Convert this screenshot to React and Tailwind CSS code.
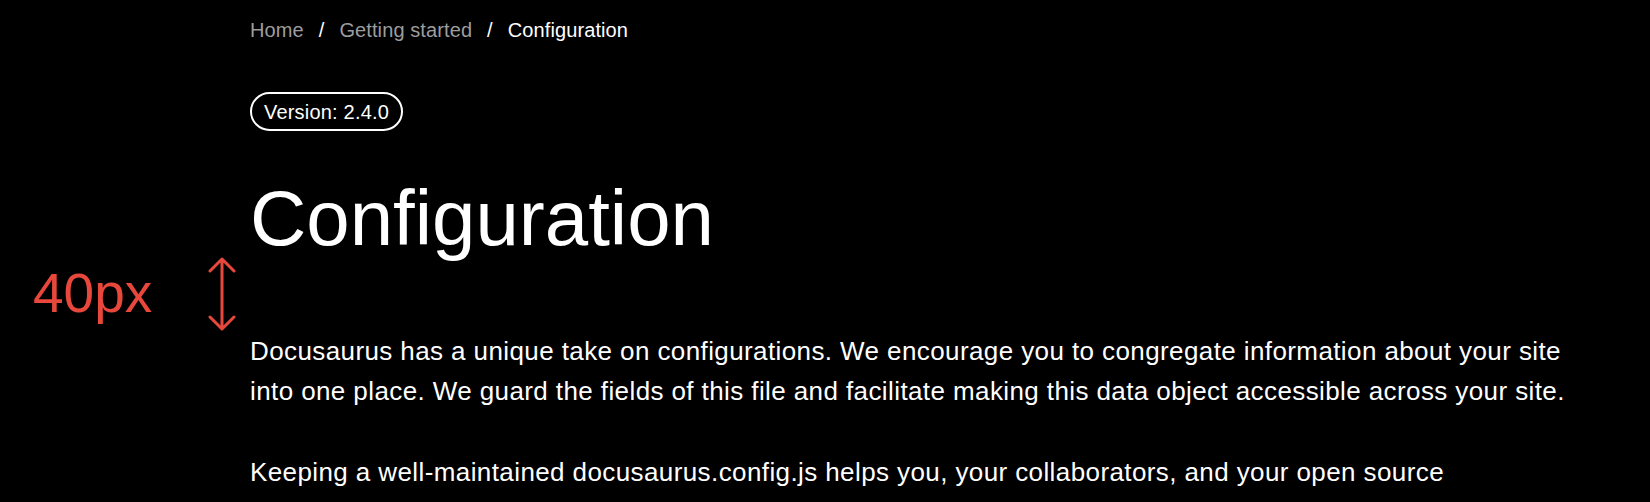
export default function App() {
  const crumbs = [
    { text: "Home", active: false },
    { text: "Getting started", active: false },
    { text: "Configuration", active: true },
  ];

  return (
    <div className="relative w-full h-[502px] overflow-hidden bg-black text-white font-['Liberation_Sans',Arial,sans-serif]">
      {/* spacing annotation */}
      <div className="absolute left-[33px] top-[266px] text-[55px] leading-[55px] text-[#e8473c]">40px</div>
      <svg className="absolute left-[208px] top-[256px]" width="28" height="76" viewBox="0 0 28 76" fill="none">
        <path d="M14 3 V73 M2 15 L14 3 L26 15 M2 61 L14 73 L26 61" stroke="#e8473c" strokeWidth="3" strokeLinecap="round" strokeLinejoin="round" />
      </svg>

      <main className="pl-[250px] pr-[63px] pt-[18px]">
        <nav className="flex items-center text-[20px] leading-6 tracking-[0.1px]">
          {crumbs.map((c, i) => (
            <span key={i} className="flex items-center">
              <span className={c.active ? "text-white" : "text-[#9d9d9d]"}>{c.text}</span>
              {i < crumbs.length - 1 && <span className="mx-[15px] text-white">/</span>}
            </span>
          ))}
        </nav>

        <div className="mt-[50px]">
          <span className="inline-block rounded-full border-2 border-white px-3 py-[5.5px] text-[20px] leading-6 tracking-[0.2px]">
            Version: 2.4.0
          </span>
        </div>

        <h1 className="mt-[41px] text-[78px] leading-[92px] font-normal">Configuration</h1>

        <p className="mt-[67px] text-[26px] leading-[40px] tracking-[0.4px]">
          Docusaurus has a unique take on configurations. We encourage you to congregate information about your site into one place. We guard the fields of this file and facilitate making this data object accessible across your site.
        </p>
        <p className="mt-[41px] text-[26px] leading-[40px] tracking-[0.4px]">
          Keeping a well-maintained docusaurus.config.js helps you, your collaborators, and your open source contributors be able to focus on documentation while still being able to customize the site.
        </p>
      </main>
    </div>
  );
}
